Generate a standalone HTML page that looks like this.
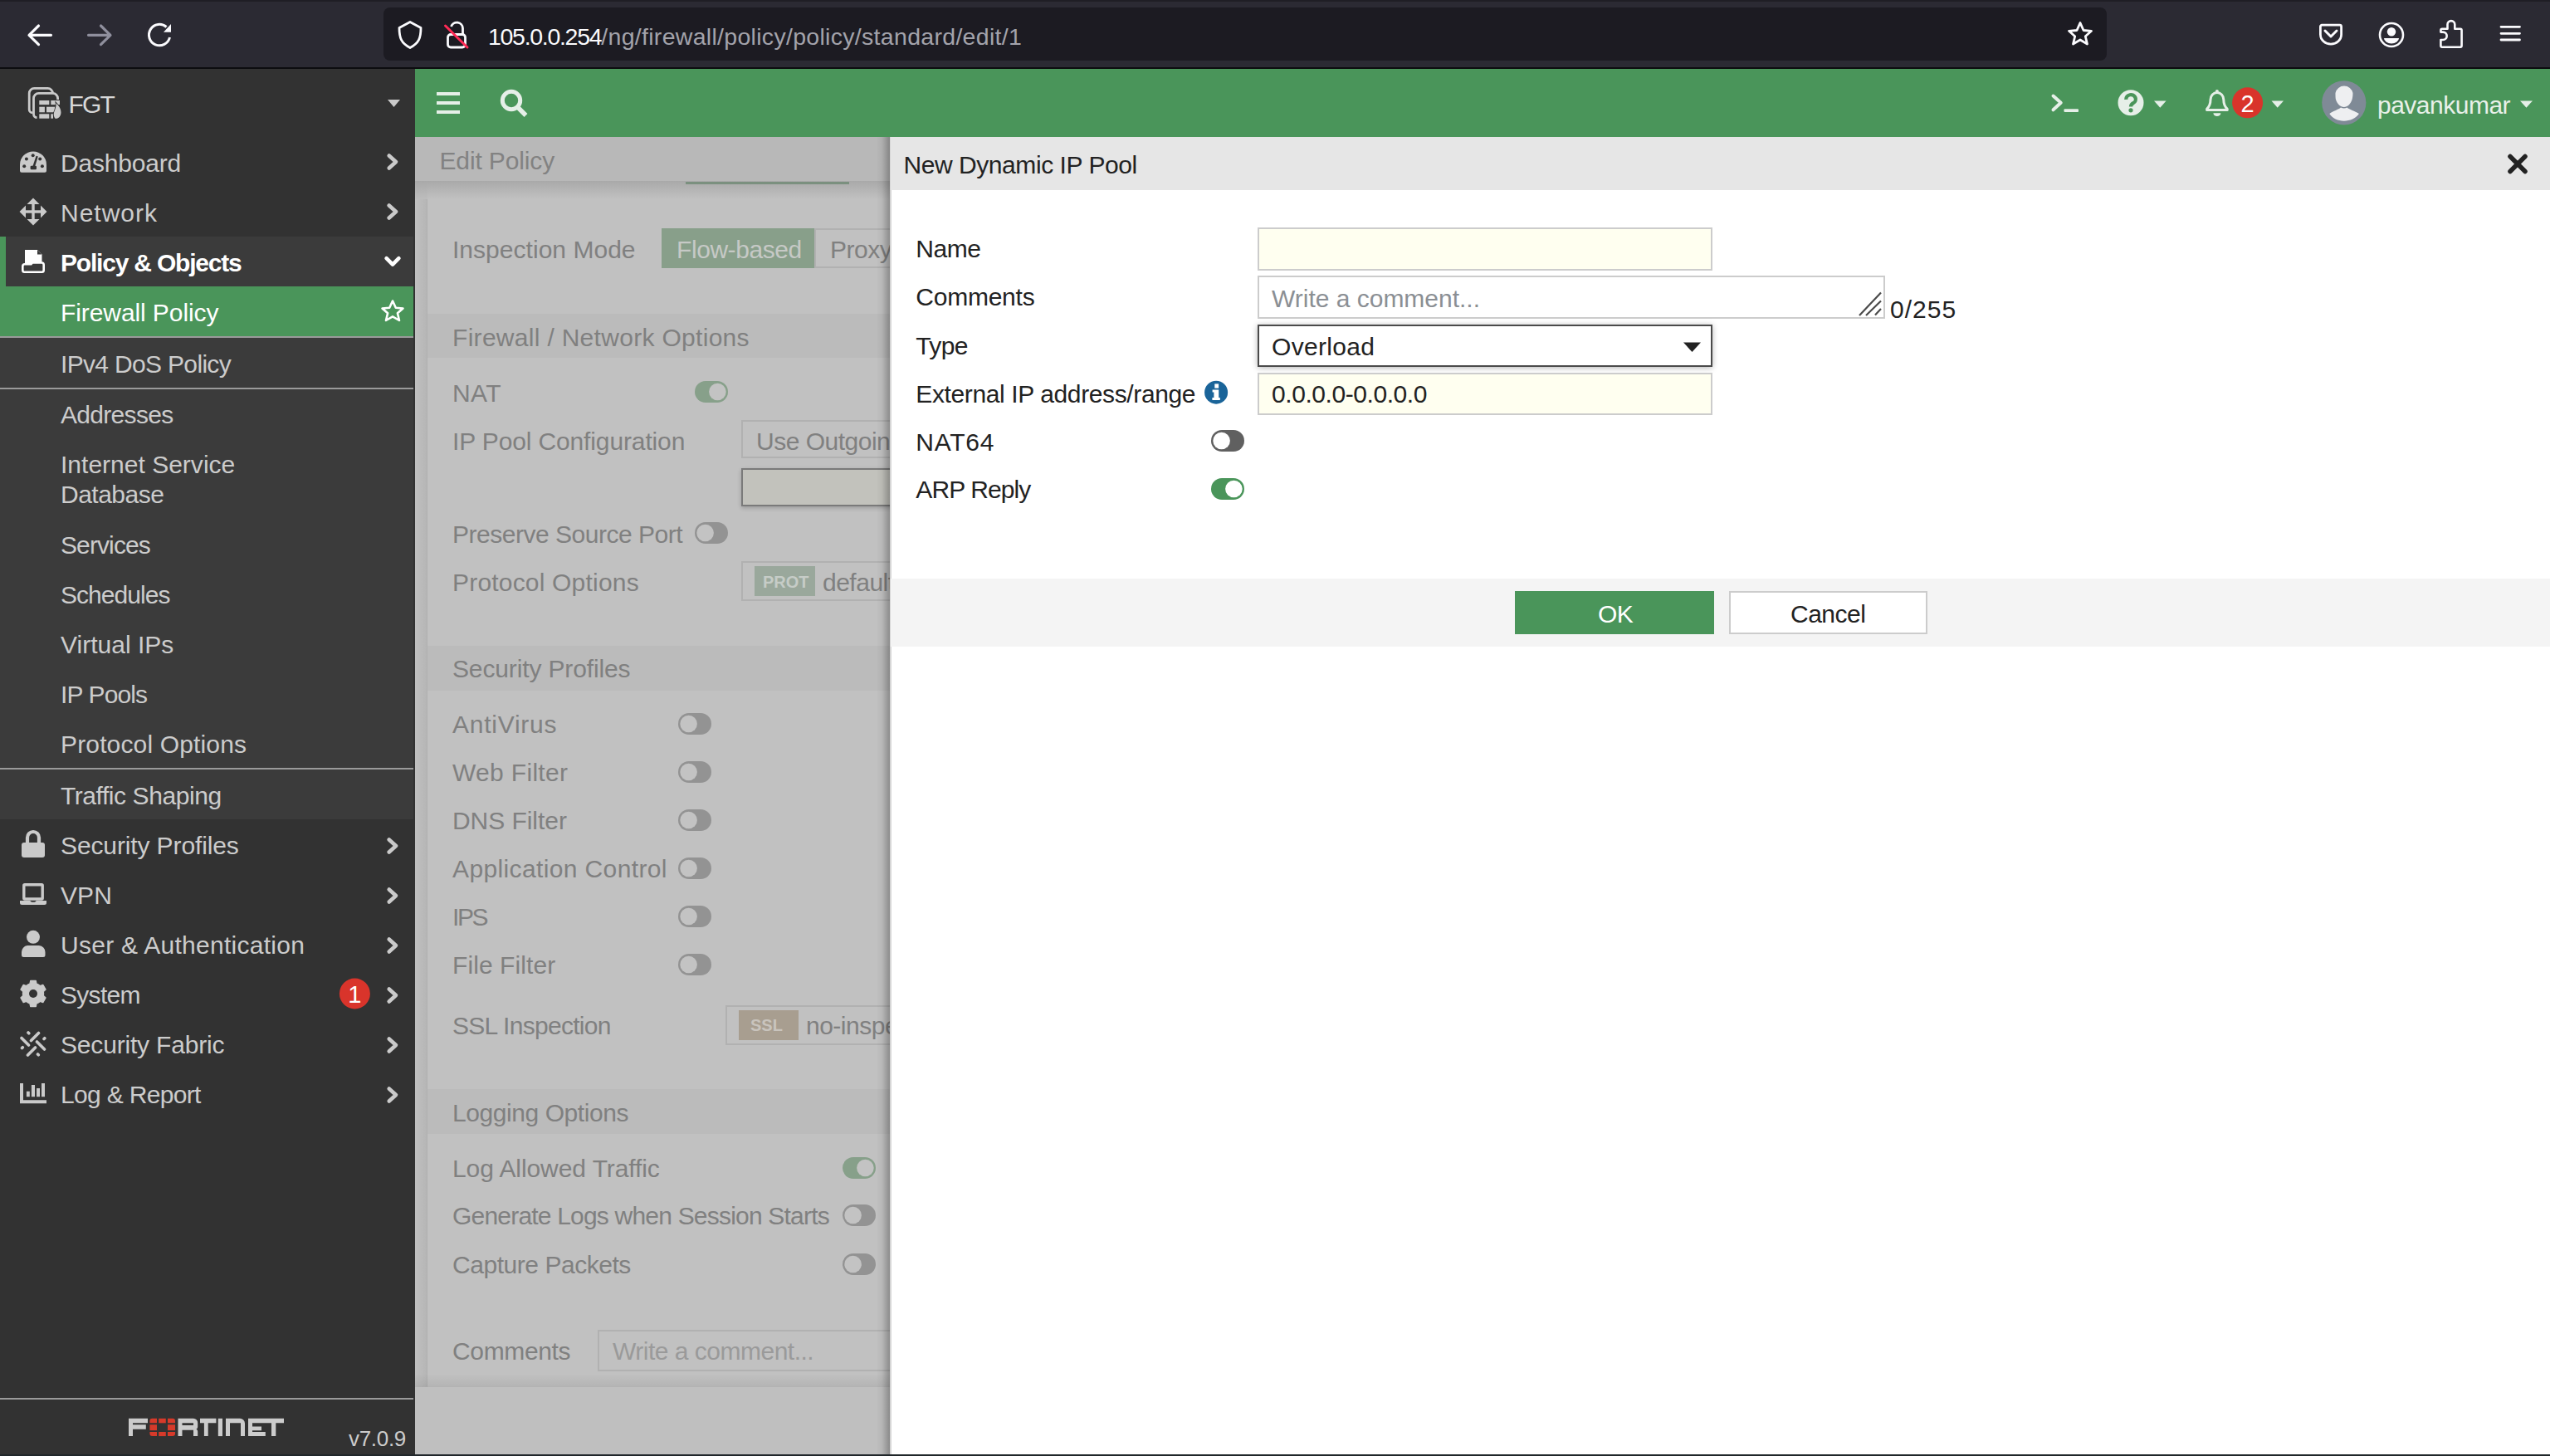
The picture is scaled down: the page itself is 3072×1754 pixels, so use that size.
<!DOCTYPE html>
<html><head><meta charset="utf-8"><title>FGT</title>
<style>
html,body{margin:0;padding:0;width:3072px;height:1754px;overflow:hidden;background:#fff;}
body{position:relative;font-family:"Liberation Sans",sans-serif;}
.t{position:absolute;white-space:nowrap;}
.r{position:absolute;}
svg{position:absolute;overflow:visible;}
</style></head><body>
<div class="r" style="left:0px;top:0px;width:3072px;height:83px;background:#2b2a33;"></div>
<div class="r" style="left:0px;top:0px;width:3072px;height:2px;background:#1f1e25;"></div>
<div class="r" style="left:0px;top:81px;width:3072px;height:2px;background:#0c0c0f;"></div>
<div class="r" style="left:462px;top:9px;width:2076px;height:64px;background:#1c1b22;border-radius:8px;"></div>
<div class="t " style="left:588px;top:27.62px;font-size:28.5px;line-height:33px;color:#fbfbfe;font-weight:normal;letter-spacing:0px;"><span style="letter-spacing:-1.3px">105.0.0.254</span><span style="color:#a3a3ab;letter-spacing:0.3px">/ng/firewall/policy/policy/standard/edit/1</span></div>
<div class="r" style="left:0px;top:83px;width:500px;height:1671px;background:#323232;"></div>
<div class="r" style="left:0px;top:285px;width:498px;height:702px;background:#3b3b3b;"></div>
<div class="r" style="left:0px;top:285px;width:7px;height:60px;background:#4a955a;"></div>
<div class="r" style="left:0px;top:345px;width:498px;height:60px;background:#4a955a;"></div>
<div class="r" style="left:0px;top:405px;width:498px;height:2px;background:#9a9a9a;"></div>
<div class="r" style="left:0px;top:467px;width:498px;height:2px;background:#9a9a9a;"></div>
<div class="r" style="left:0px;top:925px;width:498px;height:2px;background:#9a9a9a;"></div>
<div class="r" style="left:0px;top:1684px;width:498px;height:2px;background:#9a9a9a;"></div>
<div class="t " style="left:82.5px;top:108.60px;font-size:30px;line-height:34px;color:#d8d8d8;font-weight:normal;letter-spacing:-1.8px;">FGT</div>
<div class="t " style="left:73px;top:179.60px;font-size:30px;line-height:34px;color:#ccc;font-weight:normal;letter-spacing:-0.2px;">Dashboard</div>
<div class="t " style="left:73px;top:239.60px;font-size:30px;line-height:34px;color:#ccc;font-weight:normal;letter-spacing:1.0px;">Network</div>
<div class="t " style="left:73px;top:299.61px;font-size:30px;line-height:34px;color:#fff;font-weight:bold;letter-spacing:-1.2px;">Policy &amp; Objects</div>
<div class="t " style="left:73px;top:359.61px;font-size:30px;line-height:34px;color:#fff;font-weight:normal;letter-spacing:-0.09px;">Firewall Policy</div>
<div class="t " style="left:73px;top:421.61px;font-size:30px;line-height:34px;color:#ccc;font-weight:normal;letter-spacing:-0.67px;">IPv4 DoS Policy</div>
<div class="t " style="left:73px;top:483.11px;font-size:30px;line-height:34px;color:#ccc;font-weight:normal;letter-spacing:-0.69px;">Addresses</div>
<div class="t " style="left:73px;top:543.11px;font-size:30px;line-height:34px;color:#ccc;font-weight:normal;letter-spacing:0.01px;">Internet Service</div>
<div class="t " style="left:73px;top:579.40px;font-size:30px;line-height:34px;color:#ccc;font-weight:normal;letter-spacing:-0.5px;">Database</div>
<div class="t " style="left:73px;top:639.61px;font-size:30px;line-height:34px;color:#ccc;font-weight:normal;letter-spacing:-0.89px;">Services</div>
<div class="t " style="left:73px;top:699.61px;font-size:30px;line-height:34px;color:#ccc;font-weight:normal;letter-spacing:-0.96px;">Schedules</div>
<div class="t " style="left:73px;top:759.61px;font-size:30px;line-height:34px;color:#ccc;font-weight:normal;letter-spacing:0.01px;">Virtual IPs</div>
<div class="t " style="left:73px;top:819.61px;font-size:30px;line-height:34px;color:#ccc;font-weight:normal;letter-spacing:-0.87px;">IP Pools</div>
<div class="t " style="left:73px;top:879.61px;font-size:30px;line-height:34px;color:#ccc;font-weight:normal;letter-spacing:0.15px;">Protocol Options</div>
<div class="t " style="left:73px;top:941.61px;font-size:30px;line-height:34px;color:#ccc;font-weight:normal;letter-spacing:-0.43px;">Traffic Shaping</div>
<div class="t " style="left:73px;top:1001.61px;font-size:30px;line-height:34px;color:#ccc;font-weight:normal;letter-spacing:-0.12px;">Security Profiles</div>
<div class="t " style="left:73px;top:1061.61px;font-size:30px;line-height:34px;color:#ccc;font-weight:normal;letter-spacing:0.1px;">VPN</div>
<div class="t " style="left:73px;top:1121.61px;font-size:30px;line-height:34px;color:#ccc;font-weight:normal;letter-spacing:0.27px;">User &amp; Authentication</div>
<div class="t " style="left:73px;top:1181.61px;font-size:30px;line-height:34px;color:#ccc;font-weight:normal;letter-spacing:-0.7px;">System</div>
<div class="t " style="left:73px;top:1241.61px;font-size:30px;line-height:34px;color:#ccc;font-weight:normal;letter-spacing:-0.18px;">Security Fabric</div>
<div class="t " style="left:73px;top:1301.61px;font-size:30px;line-height:34px;color:#ccc;font-weight:normal;letter-spacing:-0.68px;">Log &amp; Report</div>
<div class="t " style="left:420px;top:1717.99px;font-size:26px;line-height:30px;color:#ccc;font-weight:normal;letter-spacing:-0.3px;">v7.0.9</div>
<div class="r" style="left:500px;top:83px;width:2572px;height:82px;background:#4a955a;"></div>
<div class="t " style="left:2864px;top:109.60px;font-size:30px;line-height:34px;color:#e8f0e9;font-weight:normal;letter-spacing:-0.5px;">pavankumar</div>
<div class="r" style="left:500px;top:165px;width:573px;height:1589px;background:#bfbfbf;"></div>
<div class="r" style="left:500px;top:165px;width:573px;height:53px;background:#b8b8b8;"></div>
<div class="r" style="left:515px;top:218px;width:558px;height:1452px;background:#c1c1c1;"></div>
<div class="r" style="left:500px;top:218px;width:15px;height:1453px;background:linear-gradient(to right,#c0c0c0,#b5b5b5);"></div>
<div class="r" style="left:514px;top:218px;width:1px;height:1453px;background:#b0b0b0;"></div>
<div class="r" style="left:500px;top:1655px;width:573px;height:16px;background:linear-gradient(rgba(0,0,0,0),rgba(0,0,0,0.07));"></div>
<div class="r" style="left:515px;top:378px;width:558px;height:53px;background:#bbbbbb;"></div>
<div class="r" style="left:515px;top:778px;width:558px;height:54px;background:#bbbbbb;"></div>
<div class="r" style="left:515px;top:1312px;width:558px;height:54px;background:#bbbbbb;"></div>
<div class="r" style="left:515px;top:218px;width:558px;height:22px;background:linear-gradient(#a9a9a9,#c1c1c1);"></div>
<div class="r" style="left:500px;top:218px;width:15px;height:22px;background:linear-gradient(#a9a9a9,#bdbdbd);"></div>
<div class="r" style="left:826px;top:219px;width:197px;height:3px;background:#7b907f;"></div>
<div class="t " style="left:529.5px;top:176.60px;font-size:30px;line-height:34px;color:#828282;font-weight:normal;letter-spacing:-0.14px;">Edit Policy</div>
<div class="t " style="left:545px;top:284.41px;font-size:30px;line-height:34px;color:#808080;font-weight:normal;letter-spacing:0.03px;">Inspection Mode</div>
<div class="t " style="left:545px;top:389.61px;font-size:30px;line-height:34px;color:#808080;font-weight:normal;letter-spacing:0.3px;">Firewall / Network Options</div>
<div class="t " style="left:545px;top:456.61px;font-size:30px;line-height:34px;color:#808080;font-weight:normal;letter-spacing:0.4px;">NAT</div>
<div class="t " style="left:545px;top:514.61px;font-size:30px;line-height:34px;color:#808080;font-weight:normal;letter-spacing:-0.13px;">IP Pool Configuration</div>
<div class="t " style="left:545px;top:626.61px;font-size:30px;line-height:34px;color:#808080;font-weight:normal;letter-spacing:-0.49px;">Preserve Source Port</div>
<div class="t " style="left:545px;top:685.00px;font-size:30px;line-height:34px;color:#808080;font-weight:normal;letter-spacing:0.19px;">Protocol Options</div>
<div class="t " style="left:545px;top:788.61px;font-size:30px;line-height:34px;color:#808080;font-weight:normal;letter-spacing:-0.14px;">Security Profiles</div>
<div class="t " style="left:545px;top:856.11px;font-size:30px;line-height:34px;color:#808080;font-weight:normal;letter-spacing:0.75px;">AntiVirus</div>
<div class="t " style="left:545px;top:913.61px;font-size:30px;line-height:34px;color:#808080;font-weight:normal;letter-spacing:0.32px;">Web Filter</div>
<div class="t " style="left:545px;top:971.61px;font-size:30px;line-height:34px;color:#808080;font-weight:normal;letter-spacing:-0.05px;">DNS Filter</div>
<div class="t " style="left:545px;top:1029.61px;font-size:30px;line-height:34px;color:#808080;font-weight:normal;letter-spacing:0.37px;">Application Control</div>
<div class="t " style="left:545px;top:1088.31px;font-size:30px;line-height:34px;color:#808080;font-weight:normal;letter-spacing:-2.4px;">IPS</div>
<div class="t " style="left:545px;top:1146.11px;font-size:30px;line-height:34px;color:#808080;font-weight:normal;letter-spacing:0.08px;">File Filter</div>
<div class="t " style="left:545px;top:1218.61px;font-size:30px;line-height:34px;color:#808080;font-weight:normal;letter-spacing:-0.71px;">SSL Inspection</div>
<div class="t " style="left:545px;top:1324.20px;font-size:30px;line-height:34px;color:#808080;font-weight:normal;letter-spacing:-0.43px;">Logging Options</div>
<div class="t " style="left:545px;top:1390.61px;font-size:30px;line-height:34px;color:#808080;font-weight:normal;letter-spacing:-0.08px;">Log Allowed Traffic</div>
<div class="t " style="left:545px;top:1447.61px;font-size:30px;line-height:34px;color:#808080;font-weight:normal;letter-spacing:-0.5px;"><span style="letter-spacing:-0.8px">Generate Logs when Session Starts</span></div>
<div class="t " style="left:545px;top:1506.61px;font-size:30px;line-height:34px;color:#808080;font-weight:normal;letter-spacing:-0.46px;">Capture Packets</div>
<div class="t " style="left:545px;top:1610.61px;font-size:30px;line-height:34px;color:#808080;font-weight:normal;letter-spacing:-0.36px;">Comments</div>
<div class="r" style="left:797px;top:275px;width:184px;height:48px;background:#889f8a;"></div>
<div class="t " style="left:815px;top:283.50px;font-size:30px;line-height:34px;color:#c6c9c6;font-weight:normal;letter-spacing:-0.43px;">Flow-based</div>
<div class="r" style="left:981px;top:275px;width:120px;height:48px;background:#c1c1c1;box-sizing:border-box;border:2px solid #b1b1b1;"></div>
<div class="t " style="left:1000px;top:283.50px;font-size:30px;line-height:34px;color:#808080;font-weight:normal;letter-spacing:-0.5px;">Proxy</div>
<div class="r" style="left:893px;top:506px;width:200px;height:46px;background:#c1c1c1;box-sizing:border-box;border:2px solid #b1b1b1;"></div>
<div class="t " style="left:911px;top:514.61px;font-size:30px;line-height:34px;color:#808080;font-weight:normal;letter-spacing:-0.5px;">Use Outgoing</div>
<div class="r" style="left:893px;top:564px;width:200px;height:46px;background:#c2c2bc;box-sizing:border-box;border:2px solid #7a7a7a;box-shadow:0 2px 5px rgba(0,0,0,0.2);"></div>
<div class="r" style="left:893px;top:676px;width:200px;height:48px;background:#c1c1c1;box-sizing:border-box;border:2px solid #b1b1b1;"></div>
<div class="r" style="left:909px;top:682px;width:73px;height:36px;background:#9aa89c;"></div>
<div class="t " style="left:919px;top:689.57px;font-size:20px;line-height:23px;color:#c6ccc7;font-weight:bold;letter-spacing:0px;">PROT</div>
<div class="t " style="left:991px;top:685.00px;font-size:30px;line-height:34px;color:#808080;font-weight:normal;letter-spacing:-0.5px;">default</div>
<div class="r" style="left:874px;top:1211px;width:220px;height:48px;background:#c1c1c1;box-sizing:border-box;border:2px solid #b1b1b1;"></div>
<div class="r" style="left:890px;top:1217px;width:72px;height:36px;background:#a89e90;"></div>
<div class="t " style="left:904px;top:1223.57px;font-size:20px;line-height:23px;color:#c9c4bd;font-weight:bold;letter-spacing:0px;">SSL</div>
<div class="t " style="left:971px;top:1218.61px;font-size:30px;line-height:34px;color:#808080;font-weight:normal;letter-spacing:-0.5px;">no-inspection</div>
<div class="r" style="left:720px;top:1602px;width:373px;height:50px;background:#c1c1c1;box-sizing:border-box;border:2px solid #b1b1b1;"></div>
<div class="t " style="left:738px;top:1610.61px;font-size:30px;line-height:34px;color:#9a9a9a;font-weight:normal;letter-spacing:-0.5px;">Write a comment...</div>
<svg style="left:835px;top:457px" width="44" height="30" viewBox="0 0 44 30"><rect x="2" y="2" width="40" height="26" rx="13" fill="#87a08a"/><circle cx="29.4" cy="15" r="10.3" fill="#c3c3c3"/></svg>
<svg style="left:835px;top:627px" width="44" height="30" viewBox="0 0 44 30"><rect x="2" y="2" width="40" height="26" rx="13" fill="#939393"/><circle cx="14.6" cy="15" r="10.3" fill="#c3c3c3"/></svg>
<svg style="left:815px;top:857.0px" width="44" height="30" viewBox="0 0 44 30"><rect x="2" y="2" width="40" height="26" rx="13" fill="#939393"/><circle cx="14.6" cy="15" r="10.3" fill="#c3c3c3"/></svg>
<svg style="left:815px;top:914.5px" width="44" height="30" viewBox="0 0 44 30"><rect x="2" y="2" width="40" height="26" rx="13" fill="#939393"/><circle cx="14.6" cy="15" r="10.3" fill="#c3c3c3"/></svg>
<svg style="left:815px;top:972.5px" width="44" height="30" viewBox="0 0 44 30"><rect x="2" y="2" width="40" height="26" rx="13" fill="#939393"/><circle cx="14.6" cy="15" r="10.3" fill="#c3c3c3"/></svg>
<svg style="left:815px;top:1030.5px" width="44" height="30" viewBox="0 0 44 30"><rect x="2" y="2" width="40" height="26" rx="13" fill="#939393"/><circle cx="14.6" cy="15" r="10.3" fill="#c3c3c3"/></svg>
<svg style="left:815px;top:1089.2px" width="44" height="30" viewBox="0 0 44 30"><rect x="2" y="2" width="40" height="26" rx="13" fill="#939393"/><circle cx="14.6" cy="15" r="10.3" fill="#c3c3c3"/></svg>
<svg style="left:815px;top:1147.0px" width="44" height="30" viewBox="0 0 44 30"><rect x="2" y="2" width="40" height="26" rx="13" fill="#939393"/><circle cx="14.6" cy="15" r="10.3" fill="#c3c3c3"/></svg>
<svg style="left:1013px;top:1392px" width="44" height="30" viewBox="0 0 44 30"><rect x="2" y="2" width="40" height="26" rx="13" fill="#87a08a"/><circle cx="29.4" cy="15" r="10.3" fill="#c3c3c3"/></svg>
<svg style="left:1013px;top:1449px" width="44" height="30" viewBox="0 0 44 30"><rect x="2" y="2" width="40" height="26" rx="13" fill="#939393"/><circle cx="14.6" cy="15" r="10.3" fill="#c3c3c3"/></svg>
<svg style="left:1013px;top:1508px" width="44" height="30" viewBox="0 0 44 30"><rect x="2" y="2" width="40" height="26" rx="13" fill="#939393"/><circle cx="14.6" cy="15" r="10.3" fill="#c3c3c3"/></svg>
<div class="r" style="left:1056px;top:165px;width:16px;height:1589px;background:linear-gradient(to right, rgba(0,0,0,0), rgba(0,0,0,0.05) 40%, rgba(0,0,0,0.28));"></div>
<div class="r" style="left:1073px;top:165px;width:1999px;height:1589px;background:#fff;"></div>
<div class="r" style="left:1072px;top:165px;width:2px;height:1589px;background:#d6d6d6;"></div>
<div class="r" style="left:1073px;top:165px;width:1999px;height:64px;background:#e6e6e6;"></div>
<div class="t " style="left:1088.5px;top:181.60px;font-size:30px;line-height:34px;color:#222;font-weight:normal;letter-spacing:-0.44px;">New Dynamic IP Pool</div>
<div class="t " style="left:1103.3px;top:283.21px;font-size:30px;line-height:34px;color:#222;font-weight:normal;letter-spacing:-0.5px;">Name</div>
<div class="t " style="left:1103.3px;top:341.21px;font-size:30px;line-height:34px;color:#222;font-weight:normal;letter-spacing:-0.24px;">Comments</div>
<div class="t " style="left:1103.3px;top:399.61px;font-size:30px;line-height:34px;color:#222;font-weight:normal;letter-spacing:-0.63px;">Type</div>
<div class="t " style="left:1103.3px;top:457.61px;font-size:30px;line-height:34px;color:#222;font-weight:normal;letter-spacing:-0.38px;">External IP address/range</div>
<div class="t " style="left:1103.3px;top:515.61px;font-size:30px;line-height:34px;color:#222;font-weight:normal;letter-spacing:0.75px;">NAT64</div>
<div class="t " style="left:1103.3px;top:573.21px;font-size:30px;line-height:34px;color:#222;font-weight:normal;letter-spacing:-0.9px;">ARP Reply</div>
<div class="r" style="left:1515px;top:274px;width:548px;height:52px;background:#fffff0;box-sizing:border-box;border:2px solid #ccc;"></div>
<div class="r" style="left:1515px;top:332px;width:756px;height:52px;background:#fff;box-sizing:border-box;border:2px solid #ccc;"></div>
<div class="t " style="left:1532px;top:342.61px;font-size:30px;line-height:34px;color:#8b8f94;font-weight:normal;letter-spacing:-0.01px;">Write a comment...</div>
<div class="t " style="left:2277px;top:356.11px;font-size:30px;line-height:34px;color:#222;font-weight:normal;letter-spacing:1.0px;">0/255</div>
<div class="r" style="left:1515px;top:391px;width:548px;height:51px;background:#fff;box-sizing:border-box;border:2px solid #4a4a4a;box-shadow:0 1px 7px rgba(0,0,0,0.3);"></div>
<div class="t " style="left:1532px;top:401.31px;font-size:30px;line-height:34px;color:#222;font-weight:normal;letter-spacing:0.3px;">Overload</div>
<div class="r" style="left:1515px;top:449px;width:548px;height:51px;background:#fffff0;box-sizing:border-box;border:2px solid #ccc;"></div>
<div class="t " style="left:1532px;top:457.61px;font-size:30px;line-height:34px;color:#222;font-weight:normal;letter-spacing:-0.43px;">0.0.0.0-0.0.0.0</div>
<svg style="left:1457px;top:516px" width="44" height="30" viewBox="0 0 44 30"><rect x="2" y="2" width="40" height="26" rx="13" fill="#606060"/><circle cx="14.6" cy="15" r="10.3" fill="#fff"/></svg>
<svg style="left:1457px;top:574px" width="44" height="30" viewBox="0 0 44 30"><rect x="2" y="2" width="40" height="26" rx="13" fill="#4a955a"/><circle cx="29.4" cy="15" r="10.3" fill="#fff"/></svg>
<div class="r" style="left:1073px;top:697px;width:1999px;height:82px;background:#f4f4f4;"></div>
<div class="r" style="left:1825px;top:712px;width:240px;height:52px;background:#4a955a;"></div>
<div class="t " style="left:1925px;top:722.61px;font-size:30px;line-height:34px;color:#fff;font-weight:normal;letter-spacing:-0.5px;">OK</div>
<div class="r" style="left:2083px;top:712px;width:239px;height:52px;background:#fff;box-sizing:border-box;border:2px solid #ccc;"></div>
<div class="t " style="left:2157px;top:722.61px;font-size:30px;line-height:34px;color:#222;font-weight:normal;letter-spacing:-0.5px;">Cancel</div>
<svg style="left:0px;top:0px" width="260" height="83" viewBox="0 0 260 83"><path d="M61.5 42.3H35.5M46.5 31L35 42.3L46.5 53.6" fill="none" stroke="#fbfbfe" stroke-width="3.2" stroke-linecap="round" stroke-linejoin="round"/><path d="M106.5 42.3H132.5M121.5 31L133 42.3L121.5 53.6" fill="none" stroke="#8f8f9d" stroke-width="3.2" stroke-linecap="round" stroke-linejoin="round"/><path d="M204.5 45A12.7 12.7 0 1 1 200.5 32.5" fill="none" stroke="#fbfbfe" stroke-width="3"/><path d="M197 38.7L206 29V38.7Z" fill="#fbfbfe"/></svg>
<svg style="left:460px;top:16px" width="120" height="55" viewBox="0 0 120 55"><path d="M34 10.5L21 17.5C21 30 23.5 36 34 41.5C44.5 36 47 30 47 17.5Z" fill="none" stroke="#fbfbfe" stroke-width="2.8" stroke-linejoin="round"/><rect x="79.5" y="25.5" width="21" height="15.5" rx="3.5" fill="none" stroke="#fbfbfe" stroke-width="2.8"/><path d="M83.5 16A7.2 7.2 0 0 1 97.5 18V25" fill="none" stroke="#fbfbfe" stroke-width="2.8"/><path d="M76.5 15L103 41" stroke="#ff2a55" stroke-width="3" stroke-linecap="round"/></svg>
<svg style="left:2485px;top:20px" width="42" height="42" viewBox="0 0 42 42"><path d="M21 7.5L25 16.5L34.5 17.3L27.3 23.7L29.5 33L21 28L12.5 33L14.7 23.7L7.5 17.3L17 16.5Z" fill="none" stroke="#fbfbfe" stroke-width="2.8" stroke-linejoin="round"/></svg>
<svg style="left:2780px;top:15px" width="280" height="55" viewBox="0 0 280 55"><path d="M17 15.1H38.6A2 2 0 0 1 40.6 17.1V26.5A12.6 11.6 0 0 1 15.4 26.5V17.1A2 2 0 0 1 17 15.1Z" fill="none" stroke="#fbfbfe" stroke-width="2.8"/><path d="M21 22L28 29L35 22" fill="none" stroke="#fbfbfe" stroke-width="3" stroke-linecap="round" stroke-linejoin="round"/><circle cx="101" cy="27" r="14" fill="none" stroke="#fbfbfe" stroke-width="2.6"/><circle cx="101" cy="23.2" r="5.2" fill="#fbfbfe"/><path d="M92 31H110A9 6.5 0 0 1 92 31Z" fill="#fbfbfe"/><path d="M162 19.8H168.5V14.5A4.4 4.4 0 0 1 177.3 14.5V19.8H184A1.6 1.6 0 0 1 185.6 21.4V40.1A1.6 1.6 0 0 1 184 41.7H162A1.6 1.6 0 0 1 160.4 40.1V33H163A4.7 4.7 0 0 0 163 23.6H160.4V21.4A1.6 1.6 0 0 1 162 19.8Z" fill="none" stroke="#fbfbfe" stroke-width="2.6" stroke-linejoin="round"/><path d="M233 17.3H255.5M233 25.3H255.5M233 33H255.5" stroke="#fbfbfe" stroke-width="2.8" stroke-linecap="round"/></svg>
<svg style="left:30px;top:100px" width="50" height="50" viewBox="0 0 50 50"><path d="M9 35.9A4 4 0 0 1 5.2 31.9V12.4A6 6 0 0 1 11.2 6.4H27.5A6 6 0 0 1 33.5 12.4" fill="none" stroke="#cacaca" stroke-width="2.8"/><path d="M14.5 41.6A4 4 0 0 1 10.5 37.6V18.4A6 6 0 0 1 16.5 12.4H33.6A6 6 0 0 1 39.6 18.4V20" fill="none" stroke="#cacaca" stroke-width="2.8"/><g fill="#cacaca"><rect x="17.3" y="21" width="12" height="5.1"/><rect x="31.3" y="21" width="10.7" height="5.1"/><rect x="17.3" y="28.7" width="6.6" height="6.6"/><rect x="26" y="28.7" width="10" height="6.6"/><rect x="17.3" y="37.3" width="12" height="5.4"/><rect x="31.3" y="37.3" width="2.7" height="5.4"/><path d="M37.5 24C40 27 43.5 30 43.5 35.5C43.5 40 40.5 43 37 43C34.5 41 34 37 36 33C37 30 38 27 37.5 24Z" stroke="#323232" stroke-width="1.6" paint-order="stroke"/></g></svg>
<svg style="left:460px;top:115px" width="30" height="20" viewBox="0 0 30 20"><path d="M7 5H22L14.5 14Z" fill="#cacaca"/></svg>
<svg style="left:20px;top:178px" width="40" height="34" viewBox="0 0 40 34"><path d="M4 20.4A16 16 0 0 1 36 20.4V27.7A2 2 0 0 1 34 29.7H6A2 2 0 0 1 4 27.7Z" fill="#cacaca"/><g fill="#323232"><circle cx="9.2" cy="22.3" r="2"/><circle cx="30.9" cy="22.3" r="2"/><circle cx="11.9" cy="13.4" r="2"/><circle cx="28.2" cy="13.4" r="2"/><circle cx="19.7" cy="9.3" r="2"/><path d="M23.6 9.8L25.8 10.6L21.8 23.5H19Z"/><rect x="16.6" y="21.7" width="7.4" height="4.6" rx="1.2"/></g></svg>
<svg style="left:20px;top:235px" width="40" height="40" viewBox="0 0 40 40"><g fill="#cacaca"><path d="M20 3.5L27.5 11H12.5Z"/><path d="M20 36.5L27.5 29H12.5Z"/><path d="M3.5 20L11 12.5V27.5Z"/><path d="M36.5 20L29 12.5V27.5Z"/><rect x="18.3" y="9" width="3.4" height="22"/><rect x="9" y="18.3" width="22" height="3.4"/></g></svg>
<svg style="left:20px;top:296px" width="40" height="40" viewBox="0 0 40 40"><path d="M10 5H25L30.5 10.5V22H10Z" fill="#fff"/><path d="M25 5V10.5H30.5" fill="#3b3b3b"/><path d="M9.8 22.3H17.5L19 20.5H30.2A2.5 2.5 0 0 1 32.7 23V29.5A2.2 2.2 0 0 1 30.5 31.7H9.5A2.2 2.2 0 0 1 7.3 29.5V24.8A2.5 2.5 0 0 1 9.8 22.3Z" fill="#3b3b3b" stroke="#fff" stroke-width="2.6"/></svg>
<svg style="left:20px;top:995px" width="40" height="42" viewBox="0 0 40 42"><path d="M13 21V14A7 7 0 0 1 27 14V21" fill="none" stroke="#cacaca" stroke-width="4.2"/><rect x="6" y="20" width="28" height="18" rx="3" fill="#cacaca"/></svg>
<svg style="left:20px;top:1058px" width="40" height="36" viewBox="0 0 40 36"><rect x="8.8" y="7.8" width="22.4" height="17.2" fill="none" stroke="#cacaca" stroke-width="3.4" rx="1"/><path d="M4 27H36V29.5A2.5 2.5 0 0 1 33.5 32H6.5A2.5 2.5 0 0 1 4 29.5Z" fill="#cacaca"/><path d="M16.5 27H23.5A3.5 1.8 0 0 1 16.5 27Z" fill="#323232"/></svg>
<svg style="left:20px;top:1115px" width="40" height="42" viewBox="0 0 40 42"><circle cx="20" cy="13.8" r="8" fill="#cacaca"/><path d="M13 24H27A8 8 0 0 1 34.5 32V35.5A2.5 2.5 0 0 1 32 38H8.5A2.5 2.5 0 0 1 6 35.5V32A8 8 0 0 1 13 24Z" fill="#cacaca"/></svg>
<svg style="left:20px;top:1177px" width="40" height="40" viewBox="0 0 40 40"><polygon points="13.70,9.09 15.90,8.09 16.69,4.45 23.31,4.45 24.10,8.09 26.30,9.09 28.27,10.49 31.82,9.36 35.12,15.09 32.37,17.60 32.60,20.00 32.37,22.40 35.12,24.91 31.82,30.64 28.27,29.51 26.30,30.91 24.10,31.91 23.31,35.55 16.69,35.55 15.90,31.91 13.70,30.91 11.73,29.51 8.18,30.64 4.88,24.91 7.63,22.40 7.40,20.00 7.63,17.60 4.88,15.09 8.18,9.36 11.73,10.49" fill="#cacaca" stroke="#cacaca" stroke-width="1.2" stroke-linejoin="round"/><circle cx="20" cy="20" r="5" fill="#323232"/></svg>
<svg style="left:20px;top:1237px" width="40" height="40" viewBox="0 0 40 40"><g stroke="#cacaca" stroke-width="3.6" stroke-linecap="round"><path d="M6 13.5L14.5 22M17.5 16.5L26.5 7.5M24.5 18L33.5 27M13.5 34L22.5 25"/><path d="M14 7L14.8 7.8M33 14.5L33.8 13.7M6.5 25.5L7.3 24.7M25.5 33L26.3 33.8"/></g></svg>
<svg style="left:20px;top:1300px" width="40" height="34" viewBox="0 0 40 34"><path d="M6 4.9V27.2H36" fill="none" stroke="#cacaca" stroke-width="4"/><g fill="#cacaca"><rect x="11.9" y="14.7" width="3.9" height="6.5"/><rect x="17.9" y="7" width="4.1" height="14.2"/><rect x="24.1" y="11" width="3.9" height="10.2"/><rect x="30" y="5" width="4" height="16.2"/></g></svg>
<svg style="left:460px;top:180px" width="30" height="30" viewBox="0 0 30 30"><path d="M8.7 7.5L17 15L8.7 22.5" fill="none" stroke="#cacaca" stroke-width="4.6" stroke-linecap="round" stroke-linejoin="round"/></svg>
<svg style="left:460px;top:240px" width="30" height="30" viewBox="0 0 30 30"><path d="M8.7 7.5L17 15L8.7 22.5" fill="none" stroke="#cacaca" stroke-width="4.6" stroke-linecap="round" stroke-linejoin="round"/></svg>
<svg style="left:460px;top:1004px" width="30" height="30" viewBox="0 0 30 30"><path d="M8.7 7.5L17 15L8.7 22.5" fill="none" stroke="#cacaca" stroke-width="4.6" stroke-linecap="round" stroke-linejoin="round"/></svg>
<svg style="left:460px;top:1064px" width="30" height="30" viewBox="0 0 30 30"><path d="M8.7 7.5L17 15L8.7 22.5" fill="none" stroke="#cacaca" stroke-width="4.6" stroke-linecap="round" stroke-linejoin="round"/></svg>
<svg style="left:460px;top:1124px" width="30" height="30" viewBox="0 0 30 30"><path d="M8.7 7.5L17 15L8.7 22.5" fill="none" stroke="#cacaca" stroke-width="4.6" stroke-linecap="round" stroke-linejoin="round"/></svg>
<svg style="left:460px;top:1184px" width="30" height="30" viewBox="0 0 30 30"><path d="M8.7 7.5L17 15L8.7 22.5" fill="none" stroke="#cacaca" stroke-width="4.6" stroke-linecap="round" stroke-linejoin="round"/></svg>
<svg style="left:460px;top:1244px" width="30" height="30" viewBox="0 0 30 30"><path d="M8.7 7.5L17 15L8.7 22.5" fill="none" stroke="#cacaca" stroke-width="4.6" stroke-linecap="round" stroke-linejoin="round"/></svg>
<svg style="left:460px;top:1304px" width="30" height="30" viewBox="0 0 30 30"><path d="M8.7 7.5L17 15L8.7 22.5" fill="none" stroke="#cacaca" stroke-width="4.6" stroke-linecap="round" stroke-linejoin="round"/></svg>
<svg style="left:458px;top:300px" width="30" height="30" viewBox="0 0 30 30"><path d="M7.6 11.2L15 18.6L22.4 11.2" fill="none" stroke="#fff" stroke-width="4.6" stroke-linecap="round" stroke-linejoin="round"/></svg>
<svg style="left:455px;top:358px" width="36" height="34" viewBox="0 0 36 34"><path d="M18 4.5L21.8 12.8L30.5 13.5L23.9 19.3L26 28L18 23.3L10 28L12.1 19.3L5.5 13.5L14.2 12.8Z" fill="none" stroke="#fff" stroke-width="2.6" stroke-linejoin="round"/></svg>
<svg style="left:400px;top:1170px" width="55" height="55" viewBox="0 0 55 55"><circle cx="27.4" cy="27" r="18.5" fill="#d9342b"/><text x="27.4" y="37.5" font-family="Liberation Sans" font-size="29" fill="#fff" text-anchor="middle">1</text></svg>
<svg style="left:500px;top:83px" width="200" height="82" viewBox="0 0 200 82"><path d="M26 30H54M26 41H54M26 52H54" stroke="#e6efe8" stroke-width="4.2"/><circle cx="116" cy="38" r="10.7" fill="none" stroke="#e6efe8" stroke-width="5"/><path d="M123.5 46L133.5 56" stroke="#e6efe8" stroke-width="5.5"/></svg>
<svg style="left:2460px;top:95px" width="300" height="60" viewBox="0 0 300 60"><path d="M13.5 20.5L22.7 28.8L13.5 37.3" fill="none" stroke="#e6efe8" stroke-width="4" stroke-linecap="round" stroke-linejoin="round"/><rect x="26.5" y="36.3" width="17.5" height="3.8" rx="1" fill="#e6efe8"/><circle cx="107" cy="28.8" r="15.5" fill="#e6efe8"/><path d="M101.3 24.8A5.8 5.4 0 1 1 110 29.2C107.8 30.5 107 31.2 107 33.6" fill="none" stroke="#4a955a" stroke-width="4.3"/><circle cx="107" cy="37.8" r="2.6" fill="#4a955a"/><path d="M135 26.5H149.6L142.3 34.7Z" fill="#e6efe8"/><path d="M198.6 36.3C201.5 33.5 203 30.5 203 25A7.9 8.5 0 0 1 218.8 25C218.8 30.5 220.3 33.5 223.2 36.3V37.6H198.6Z" fill="none" stroke="#e6efe8" stroke-width="3" stroke-linejoin="round"/><circle cx="210.9" cy="15" r="2" fill="#e6efe8"/><path d="M206.4 41.3H215.4A4.5 3.8 0 0 1 206.4 41.3Z" fill="#e6efe8"/><circle cx="247.6" cy="28.8" r="18.5" fill="#d9342b"/><text x="247.6" y="39.5" font-family="Liberation Sans" font-size="29" fill="#fff" text-anchor="middle">2</text><path d="M276.5 26.5H291L283.7 34.7Z" fill="#e6efe8"/></svg>
<svg style="left:2790px;top:90px" width="70" height="70" viewBox="0 0 70 70"><circle cx="33.8" cy="33.8" r="26.6" fill="#7f8a96"/><path d="M23.5 22A10.7 10.5 0 0 1 44.5 22C44.5 26 44 28 43.5 30C42 35 38 39 33.8 39C29.5 39 25.5 35 24 30C23.5 28 23.5 26 23.5 22Z" fill="#eeeff1"/><path d="M16.3 47C21 43.5 27 42 30 39.5Q33.8 41.5 37.5 39.5C40.5 42 46.5 43.5 51.9 47C48 52.5 41 55.7 33.8 55.7C26.5 55.7 20 52.5 16.3 47Z" fill="#eeeff1"/></svg>
<svg style="left:3030px;top:115px" width="30" height="20" viewBox="0 0 30 20"><path d="M6 6.5H21L13.5 14.7Z" fill="#e6efe8"/></svg>
<svg style="left:3015px;top:180px" width="36" height="36" viewBox="0 0 36 36"><path d="M9 8.5L27 26.5M27 8.5L9 26.5" stroke="#222" stroke-width="5.5" stroke-linecap="round"/></svg>
<svg style="left:1445px;top:455px" width="40" height="36" viewBox="0 0 40 36"><circle cx="20.1" cy="17.7" r="14" fill="#1a6499"/><rect x="18.3" y="7.4" width="4.8" height="5.2" fill="#fff"/><path d="M15.6 14.6H23.2V24H24.8V27H15.4V24H17.4V17.6H15.6Z" fill="#fff"/></svg>
<svg style="left:2020px;top:405px" width="40" height="30" viewBox="0 0 40 30"><path d="M8 7.5H29L18.5 19Z" fill="#222"/></svg>
<svg style="left:2235px;top:348px" width="34" height="36" viewBox="0 0 34 36"><path d="M5 32L31 4.5M13 32L31 14.5M24 31.5L31 24" stroke="#4a4a4a" stroke-width="2.2"/></svg>
<svg style="left:145px;top:1700px" width="205" height="40" viewBox="0 0 205 40"><g fill="#cccccc"><path d="M10 8.8H33V14.3H15V16.2H30.8V21.8H15V30.1H10Z"/><path d="M69.5 8.8H88A5.2 5.2 0 0 1 93.2 14V19A3 3 0 0 1 91.5 21.7A3 3 0 0 1 93.2 24.4V30.1H88V22.8H74.5V30.1H69.5ZM74.5 14.3V16.9H88V14.3Z"/><path d="M96 8.8H115.4V14.3H105.7V30.1H100.9V14.3H96Z"/><path d="M117.8 8.8H123V30.1H117.8Z"/><path d="M127 8.8H144A6 6 0 0 1 150 14.8V30.1H145V14.3H132V30.1H127Z"/><path d="M154 8.8H197V14.3H187.3V30.1H182V14.3H159V18.5H170V23.3H159V25H174.8V30.1H154Z"/></g><g fill="#d63a2a"><path d="M38.4 8.8H44V14.3H35.4V11.8A3 3 0 0 1 38.4 8.8Z"/><rect x="46.2" y="8.8" width="8.6" height="5.5"/><path d="M57 8.8H63A3 3 0 0 1 66 11.8V14.3H57Z"/><rect x="35.4" y="16.2" width="8.6" height="6.9"/><rect x="57" y="16.2" width="9" height="6.9"/><path d="M35.4 25H44V30.1H38.4A3 3 0 0 1 35.4 27.1Z"/><rect x="46.2" y="25" width="8.6" height="5.1"/><path d="M57 25H66V27.1A3 3 0 0 1 63 30.1H57Z"/></g></svg>
<div class="r" style="left:0px;top:1752px;width:3072px;height:2px;background:#20262a;"></div>

</body></html>
